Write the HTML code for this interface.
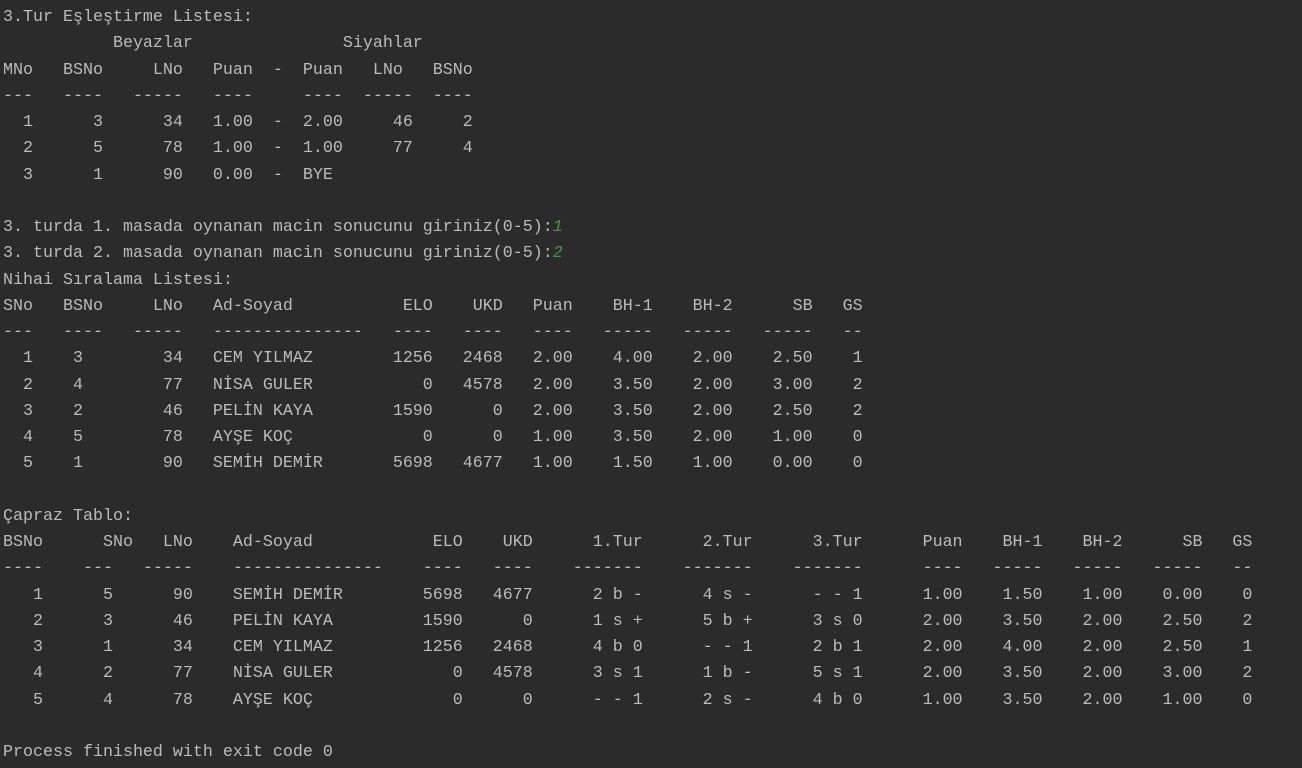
<!DOCTYPE html>
<html><head><meta charset="utf-8"><style>
html,body{margin:0;padding:0;background:#2b2b2b;width:1302px;height:768px;overflow:hidden}
pre{margin:0;padding:5px 0 0 3px;font-family:"Liberation Mono","DejaVu Sans Mono",monospace;font-size:16.667px;line-height:26.25px;color:#bbbbbb;white-space:pre}
.g{color:#3e9a3e;font-style:italic}
</style></head><body><pre>3.Tur Eşleştirme Listesi:
           Beyazlar               Siyahlar
MNo   BSNo     LNo   Puan  -  Puan   LNo   BSNo
---   ----   -----   ----     ----  -----  ----
  1      3      34   1.00  -  2.00     46     2
  2      5      78   1.00  -  1.00     77     4
  3      1      90   0.00  -  BYE

3. turda 1. masada oynanan macin sonucunu giriniz(0-5):<span class="g">1</span>
3. turda 2. masada oynanan macin sonucunu giriniz(0-5):<span class="g">2</span>
Nihai Sıralama Listesi:
SNo   BSNo     LNo   Ad-Soyad           ELO    UKD   Puan    BH-1    BH-2      SB   GS
---   ----   -----   ---------------   ----   ----   ----   -----   -----   -----   --
  1    3        34   CEM YILMAZ        1256   2468   2.00    4.00    2.00    2.50    1
  2    4        77   NİSA GULER           0   4578   2.00    3.50    2.00    3.00    2
  3    2        46   PELİN KAYA        1590      0   2.00    3.50    2.00    2.50    2
  4    5        78   AYŞE KOÇ             0      0   1.00    3.50    2.00    1.00    0
  5    1        90   SEMİH DEMİR       5698   4677   1.00    1.50    1.00    0.00    0

Çapraz Tablo:
BSNo      SNo   LNo    Ad-Soyad            ELO    UKD      1.Tur      2.Tur      3.Tur      Puan    BH-1    BH-2      SB   GS
----    ---   -----    ---------------    ----   ----    -------    -------    -------      ----   -----   -----   -----   --
   1      5      90    SEMİH DEMİR        5698   4677      2 b -      4 s -      - - 1      1.00    1.50    1.00    0.00    0
   2      3      46    PELİN KAYA         1590      0      1 s +      5 b +      3 s 0      2.00    3.50    2.00    2.50    2
   3      1      34    CEM YILMAZ         1256   2468      4 b 0      - - 1      2 b 1      2.00    4.00    2.00    2.50    1
   4      2      77    NİSA GULER            0   4578      3 s 1      1 b -      5 s 1      2.00    3.50    2.00    3.00    2
   5      4      78    AYŞE KOÇ              0      0      - - 1      2 s -      4 b 0      1.00    3.50    2.00    1.00    0

Process finished with exit code 0</pre></body></html>
